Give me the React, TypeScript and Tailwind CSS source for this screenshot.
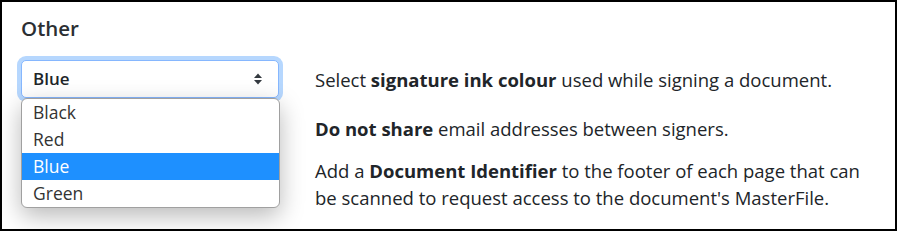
import { useState } from 'react';

const colours = ['Black', 'Red', 'Blue', 'Green'];

function SortArrows() {
  return (
    <svg width="10" height="14" viewBox="0 0 10 14" className="text-[#343a40]">
      <path d="M1 6 L5 1.5 L9 6 Z" fill="currentColor" />
      <path d="M1 8 L5 12.5 L9 8 Z" fill="currentColor" />
    </svg>
  );
}

export default function App() {
  const [value] = useState('Blue');

  return (
    <div
      className="w-[897px] h-[231px] border-2 border-black bg-white px-[18px] pt-[11px] text-[#212529] overflow-hidden"
      style={{ fontFamily: '"Open Sans", "Noto Sans", sans-serif' }}
    >
      <h5 className="text-[20.5px] font-semibold leading-[30px] ml-[1px] text-[#2b2f33]">Other</h5>

      <div className="grid grid-cols-[295px_1fr] mt-[17px]">
        <div className="relative ml-[1px] w-[258px] h-[38px]">
          <div className="absolute -inset-[4px] rounded-[9px] bg-[#b6d7fe]" />
          <div className="relative h-full rounded-[5px] border border-[#86b7fe] bg-white flex items-center justify-between pl-[11px] pr-[15px]">
            <span className="text-[17px] font-semibold">{value}</span>
            <SortArrows />
          </div>
          <ul className="absolute left-0 top-full w-[259px] z-10 bg-white border border-[#a0a0a0] rounded-[6px] shadow-[0_8px_24px_rgba(0,0,0,0.28)] overflow-hidden">
            {colours.map(c => (
              <li
                key={c}
                className={`h-[27px] leading-[27px] pl-[11px] text-[17.5px] ${
                  c === value ? 'bg-[#1e90ff] text-white' : 'text-[#333]'
                }`}
              >
                {c}
              </li>
            ))}
          </ul>
        </div>
        <p className="text-[18.5px] leading-[27px] self-center">
          Select <b className="font-bold">signature ink colour</b> used while signing a document.
        </p>

        <div />
        <p className="text-[18.5px] leading-[27px] mt-[17px]">
          <b className="font-bold">Do not share</b> email addresses between signers.
        </p>

        <div />
        <p className="text-[18.5px] leading-[27px] mt-[15px]">
          Add a <b className="font-bold">Document Identifier</b> to the footer of each page that can be scanned
          to request access to the document's MasterFile.
        </p>
      </div>
    </div>
  );
}
